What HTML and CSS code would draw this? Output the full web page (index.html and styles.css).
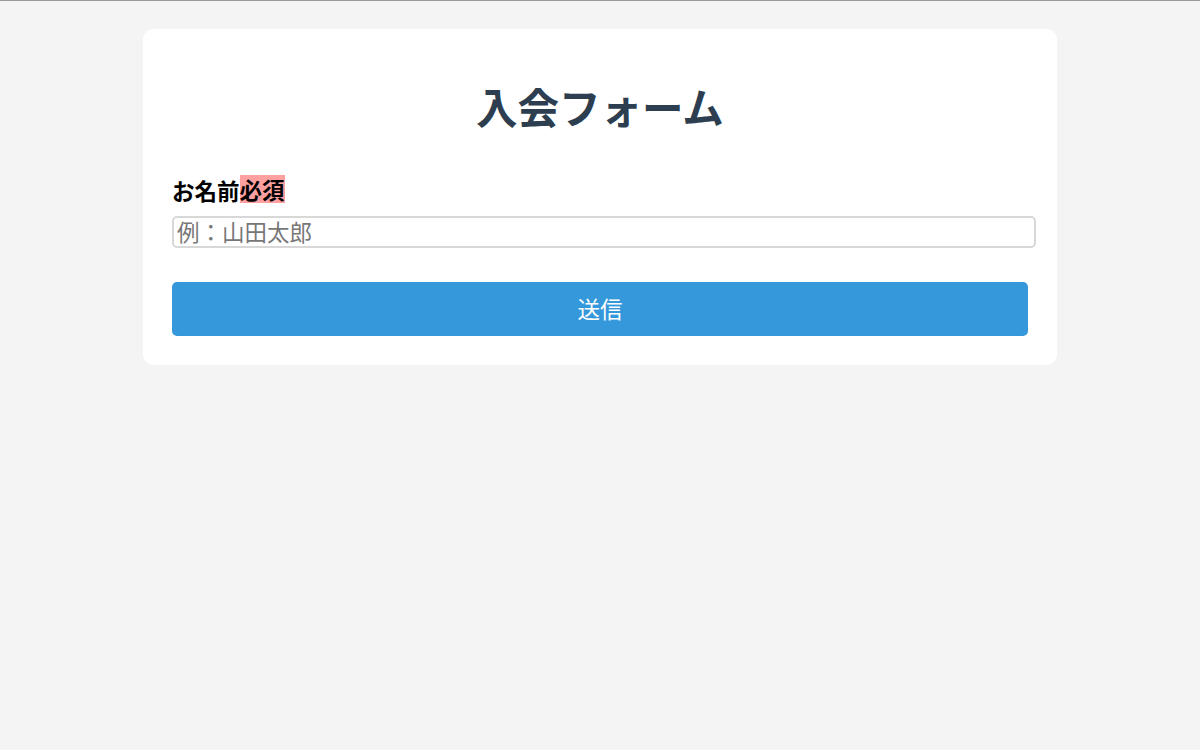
FILE: index.html
```html
<!DOCTYPE html>
<html lang="ja">
<head>
<meta charset="utf-8">
<title>入会フォーム</title>
<link rel="stylesheet" href="styles.css">
</head>
<body>
<main class="card">
  <h1 class="title">入会フォーム</h1>
  <form class="form">
    <div class="field">
      <label class="label" for="name">お名前<span class="required">必須</span></label>
      <input class="input" id="name" type="text" placeholder="例：山田太郎">
    </div>
    <button class="submit" type="button">送信</button>
  </form>
</main>
</body>
</html>
```

FILE: styles.css
```css
html, body {
  margin: 0;
  padding: 0;
}

body {
  background: #f4f4f4;
  border-top: 1px solid #9a9a9a;
  min-height: 749px;
  font-family: "Noto Sans CJK JP", "Noto Sans", sans-serif;
}

.card {
  box-sizing: border-box;
  width: 914px;
  margin: 28px auto 0;
  padding: 29px;
  background: #ffffff;
  border-radius: 11px;
}

.title {
  margin: 19px 0 0;
  font-size: 41.5px;
  line-height: 58px;
  font-weight: 700;
  color: #2c3e50;
  text-align: center;
}

.form {
  margin-top: 39px;
}

.field {
  display: flex;
  flex-direction: column;
  align-items: flex-start;
}

.label {
  display: block;
  font-size: 22.5px;
  line-height: 33px;
  font-weight: 700;
  color: #000;
  margin-bottom: 9px;
}

.required {
  display: inline-block;
  background: #ffa0a0;
  line-height: 28px;
  vertical-align: 1px;
}

.input {
  box-sizing: border-box;
  width: 864px;
  height: 32px;
  margin: 0;
  padding: 0 3px 2px;
  border: 2px solid #d8d8d8;
  border-radius: 5px;
  font-family: inherit;
  font-size: 22.5px;
  line-height: 26px;
  color: #000;
  background: #fff;
  outline: none;
}

.input::placeholder {
  color: #777777;
}

.submit {
  display: block;
  box-sizing: border-box;
  width: 100%;
  height: 54px;
  margin-top: 34px;
  border: none;
  border-radius: 5px;
  background: #3498db;
  color: #ffffff;
  font-family: inherit;
  font-size: 22.5px;
  line-height: 32px;
  padding: 0 0 2px;
}
```
